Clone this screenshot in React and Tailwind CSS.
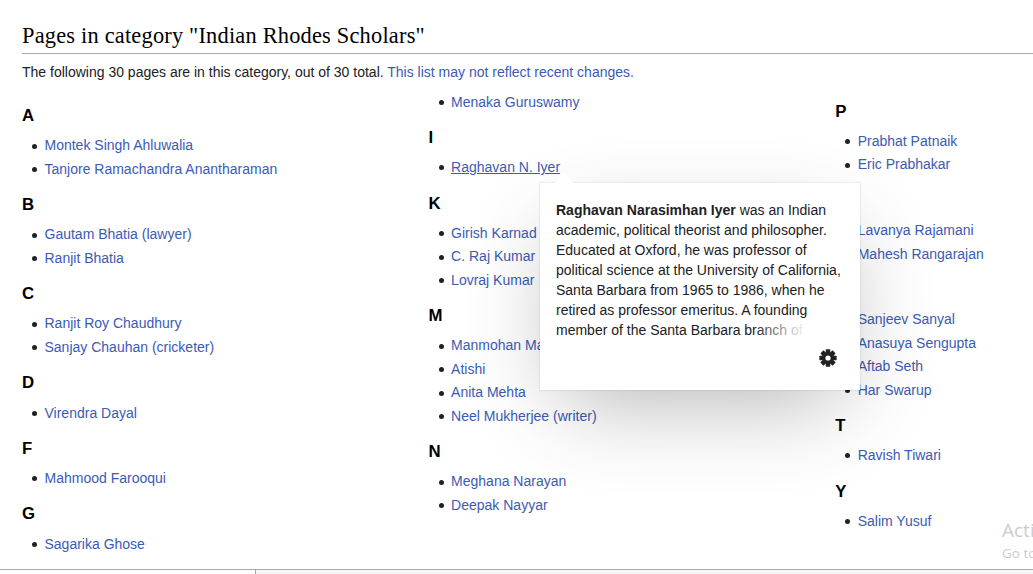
const cols = [
  { pt: "pt-[20px]", sections: [
    { h: "A", items: ["Montek Singh Ahluwalia", "Tanjore Ramachandra Anantharaman"] },
    { h: "B", items: ["Gautam Bhatia (lawyer)", "Ranjit Bhatia"] },
    { h: "C", items: ["Ranjit Roy Chaudhury", "Sanjay Chauhan (cricketer)"] },
    { h: "D", items: ["Virendra Dayal"] },
    { h: "F", items: ["Mahmood Farooqui"] },
    { h: "G", items: ["Sagarika Ghose"] },
  ]},
  { pt: "pt-[7.6px]", sections: [
    { items: ["Menaka Guruswamy"] },
    { h: "I", items: ["Raghavan N. Iyer"] },
    { h: "K", items: ["Girish Karnad", "C. Raj Kumar", "Lovraj Kumar"] },
    { h: "M", items: ["Manmohan Malhotra", "Atishi", "Anita Mehta", "Neel Mukherjee (writer)"] },
    { h: "N", items: ["Meghana Narayan", "Deepak Nayyar"] },
  ]},
  { pt: "pt-[15.7px]", sections: [
    { h: "P", items: ["Prabhat Patnaik", "Eric Prabhakar"] },
    { h: "R", items: ["Lavanya Rajamani", "Mahesh Rangarajan"] },
    { h: "S", items: ["Sanjeev Sanyal", "Anasuya Sengupta", "Aftab Seth", "Har Swarup"] },
    { h: "T", items: ["Ravish Tiwari"] },
    { h: "Y", items: ["Salim Yusuf"] },
  ]},
];

function Gear() {
  const teeth = [0, 45, 90, 135];
  return (
    <svg width="18" height="18" viewBox="0 0 20 20" fill="#202122" aria-hidden="true">
      {teeth.map((a) => (
        <rect key={a} x="7.5" y="0.4" width="5" height="19.2" rx="0.5" transform={`rotate(${a} 10 10)`} />
      ))}
      <circle cx="10" cy="10" r="6.6" />
      <circle cx="10" cy="10" r="2.9" fill="#fff" />
    </svg>
  );
}

function Section({ s }) {
  return (
    <section className="mb-[10.85px]">
      {s.h && <h3 className="text-[16.8px] font-bold leading-[26px] mb-[5.25px] text-black">{s.h}</h3>}
      <ul>
        {s.items.map((t) => (
          <li key={t} className="flex items-center h-[23.5px] leading-[23.5px]">
            <span className="w-[5px] h-[5px] rounded-full bg-[#202122] ml-[10px] mr-[7.5px] shrink-0" />
            <a className={t === "Raghavan N. Iyer" ? "text-[#3b5bb5] underline" : "text-[#3b5bb5]"}>{t}</a>
          </li>
        ))}
      </ul>
    </section>
  );
}

export default function App() {
  return (
    <div className="relative w-[1033px] h-[574px] overflow-hidden bg-white flex flex-col text-[14px] text-[#202122] font-['Liberation_Sans',Arial,sans-serif]">
      <main className="flex-1 min-h-0 pl-[22px] pt-[20px] overflow-hidden">
        <h2 className="font-['Liberation_Serif',serif] text-[22.4px] leading-[30px] pt-[1px] h-[34px] border-b border-[#a2a9b1] text-black tracking-[0.2px]">
          Pages in category "Indian Rhodes Scholars"
        </h2>
        <p className="mt-[7px] leading-[22px]">
          The following 30 pages are in this category, out of 30 total.{" "}
          <a className="text-[#3b5bb5]">This list may not reflect recent changes.</a>
        </p>
        <div className="grid grid-cols-[406.6px_406.6px_300px]">
          {cols.map((c, i) => (
            <div key={i} className={c.pt}>
              {c.sections.map((s, j) => <Section key={j} s={s} />)}
            </div>
          ))}
        </div>
      </main>

      <footer className="flex h-[5px] shrink-0 border-t border-[#a7a7a7]">
        <div className="w-[256px] bg-white border-r border-[#a7a7a7]" />
        <div className="flex-1 bg-[#f6f6f6]" />
      </footer>

      <div className="absolute left-[540px] top-[183px] w-[320px] h-[207px] bg-white shadow-[0_30px_90px_-20px_rgba(0,0,0,0.3),0_0_1px_1px_rgba(0,0,0,0.05)]">
        <div className="absolute left-[17px] top-[-7px] w-[14px] h-[14px] rotate-45 bg-white" />
        <div className="relative pt-[17px] px-[16px] h-[160px] overflow-hidden leading-[20px] text-[14px] text-[#202122]">
          <p><b>Raghavan Narasimhan Iyer</b> was an Indian academic, political theorist and philosopher. Educated at Oxford, he was professor of political science at the University of California, Santa Barbara from 1965 to 1986, when he retired as professor emeritus. A founding member of the Santa Barbara branch of</p>
          <div className="absolute right-[16px] top-[137px] w-[90px] h-[20px] bg-gradient-to-r from-transparent to-white to-[58%]" />
        </div>
        <div className="absolute left-[279px] top-[166px] w-[18px] h-[18px]"><Gear /></div>
      </div>

      <div className="absolute left-[1002px] top-[517px] whitespace-nowrap text-[#cccccc] font-['Open_Sans',sans-serif]">
        <div className="text-[19px] leading-[26px]">Activate Windows</div>
        <div className="text-[13.5px] leading-[20px]">Go to Settings</div>
      </div>
    </div>
  );
}
